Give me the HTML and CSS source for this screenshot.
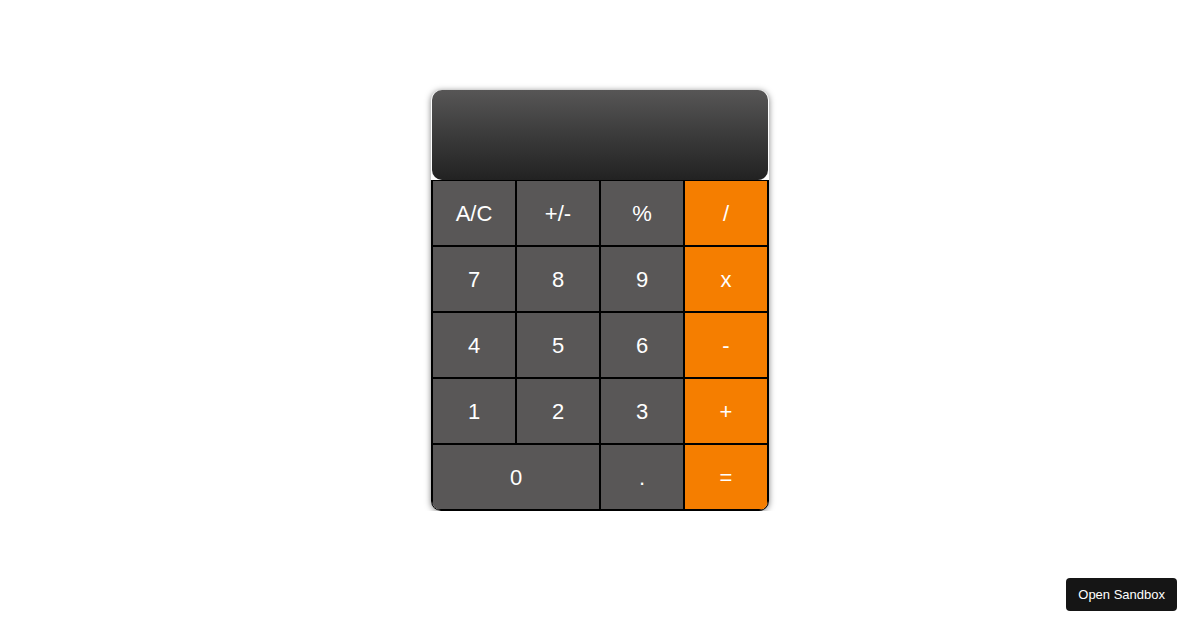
FILE: index.html
```html
<!DOCTYPE html>
<html>
<head>
<meta charset="utf-8">
<link rel="stylesheet" href="styles.css">
</head>
<body>
<div class="page">
  <div class="calculator">
    <div class="display"></div>
    <div class="keys">
      <button class="key">A/C</button>
      <button class="key">+/-</button>
      <button class="key">%</button>
      <button class="key op">/</button>
      <button class="key">7</button>
      <button class="key">8</button>
      <button class="key">9</button>
      <button class="key op">x</button>
      <button class="key">4</button>
      <button class="key">5</button>
      <button class="key">6</button>
      <button class="key op">-</button>
      <button class="key">1</button>
      <button class="key">2</button>
      <button class="key">3</button>
      <button class="key op">+</button>
      <button class="key wide">0</button>
      <button class="key">.</button>
      <button class="key op">=</button>
    </div>
  </div>
</div>
<a class="sandbox">Open Sandbox</a>
</body>
</html>
```
FILE: styles.css
```css
html, body {
  margin: 0;
  padding: 0;
  background: #ffffff;
  font-family: "Liberation Sans", Arial, sans-serif;
}
.page {
  display: flex;
  justify-content: center;
  padding-top: 90px;
}
.calculator {
  width: 338px;
  border-radius: 10px;
  background: #fff;
  box-shadow: 0 1px 6px rgba(0, 0, 0, 0.5);
}
.display {
  height: 90px;
  margin: 0 1px;
  border-radius: 10px;
  background: linear-gradient(to bottom, #575656 0%, #3b3b3b 50%, #222222 100%);
}
.keys {
  display: grid;
  grid-template-columns: repeat(4, 84px);
  grid-auto-rows: 66px;
  border: 1px solid #000;
  border-top: none;
  border-radius: 0 0 10px 10px;
  overflow: hidden;
}
.key {
  box-sizing: border-box;
  margin: 0;
  border: 1px solid #000;
  background: #595757;
  color: #ffffff;
  font-family: "Liberation Sans", Arial, sans-serif;
  font-size: 22px;
  padding: 2px 0 0 0;
  display: flex;
  align-items: center;
  justify-content: center;
}
.key.op {
  background: #f57e00;
}
.key.wide {
  grid-column: span 2;
}
.sandbox {
  position: fixed;
  right: 23px;
  bottom: 19px;
  height: 33px;
  padding: 0 12px;
  display: flex;
  align-items: center;
  background: #151515;
  color: #ffffff;
  border-radius: 4px;
  font-family: "Liberation Sans", Arial, sans-serif;
  font-size: 13px;
}
```
